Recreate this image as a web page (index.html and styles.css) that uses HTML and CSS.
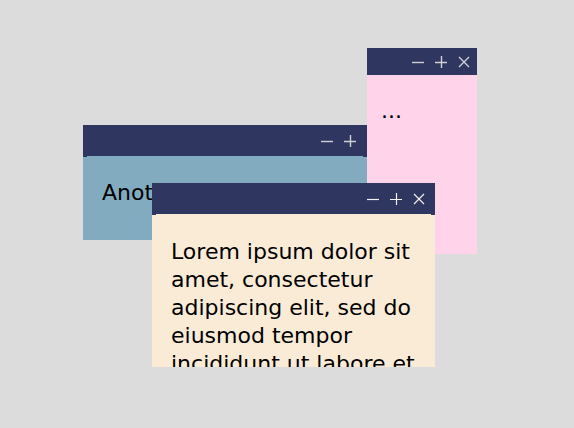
FILE: index.html
```html
<!DOCTYPE html>
<html>

<head>
    <meta name="viewport" content="width=device-width, initial-scale=1"/>
    <link rel="stylesheet" href="styles.css">
</head>

<body>
    <div class="desktop">
        <div class="window window-blue">
            <div class="titlebar">
                <span class="btn"><svg viewBox="0 0 12 12"><path d="M0 6.5H12"/></svg></span>
                <span class="btn"><svg viewBox="0 0 12 12"><path d="M0 6.5H12M6.5 0V12"/></svg></span>
            </div>
            <div class="content">Another window</div>
        </div>

        <div class="window window-pink">
            <div class="titlebar">
                <span class="btn"><svg viewBox="0 0 12 12"><path d="M0 6.5H12"/></svg></span>
                <span class="btn"><svg viewBox="0 0 12 12"><path d="M0 6.5H12M6.5 0V12"/></svg></span>
                <span class="btn"><svg viewBox="0 0 12 12"><path d="M1 1L11 11M11 1L1 11"/></svg></span>
            </div>
            <div class="content">...</div>
        </div>

        <div class="window window-cream active">
            <div class="titlebar">
                <span class="btn"><svg viewBox="0 0 12 12"><path d="M0 6.5H12"/></svg></span>
                <span class="btn"><svg viewBox="0 0 12 12"><path d="M0 6.5H12M6.5 0V12"/></svg></span>
                <span class="btn"><svg viewBox="0 0 12 12"><path d="M1 1L11 11M11 1L1 11"/></svg></span>
            </div>
            <div class="content">Lorem ipsum dolor sit amet, consectetur adipiscing elit, sed do eiusmod tempor incididunt ut labore et dolore magna aliqua.</div>
        </div>
    </div>
</body>

</html>
```

FILE: styles.css
```css
html, body {
    margin: 0;
    height: 100%;
}

body {
    background: #dcdcdc;
    font-family: "DejaVu Sans", Verdana, sans-serif;
}

.desktop {
    position: relative;
    width: 574px;
    height: 428px;
}

.window {
    position: absolute;
    display: flex;
    flex-direction: column;
    overflow: hidden;
}

.titlebar {
    flex: none;
    display: flex;
    justify-content: flex-end;
    align-items: center;
    gap: 11px;
    height: 31px;
    padding: 0 10px;
    background: #2f3660;
    border-bottom: 1px solid #2f3660;
}

.btn {
    display: block;
    width: 12px;
    height: 12px;
}

.btn svg {
    display: block;
    width: 12px;
    height: 12px;
    fill: none;
    stroke: #d0d0d4;
    stroke-width: 1.4;
}

.active .btn svg {
    stroke: #f4f0ea;
    stroke-width: 1.2;
}

/* the body sits 4px in from the frame and overlaps the bar's bottom line */
.content {
    flex: 1;
    overflow: hidden;
    margin: -1px 4px 0;
    padding: 24px 12px 0 15px;
    background: inherit;
    font-size: 22px;
    line-height: 28px;
    color: #000;
}

.window-blue {
    left: 83px;
    top: 125px;
    width: 284px;
    height: 115px;
    background: #82abbf;
}

.window-blue .titlebar {
    padding-right: 11px;
}

.window-blue .content {
    padding-top: 23px;
}

.window-pink {
    left: 367px;
    top: 48px;
    width: 110px;
    height: 206px;
    background: #ffd3ea;
}

.window-pink .titlebar {
    height: 27px;
    padding-right: 7px;
    border-bottom: 0;
}

.window-pink .content {
    margin: 0;
    padding: 22px 14px 0;
}

.window-cream {
    left: 152px;
    top: 183px;
    width: 283px;
    height: 184px;
    background: #faebd7;
}
```
